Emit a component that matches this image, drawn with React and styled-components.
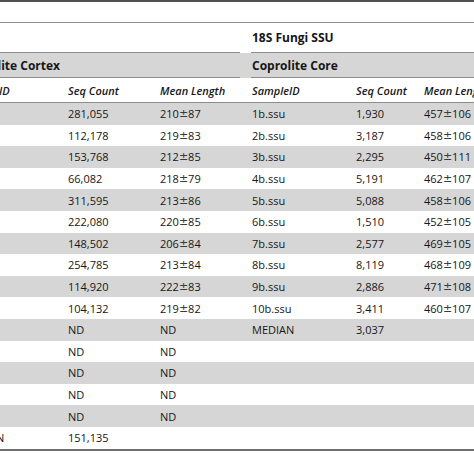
import styled, { createGlobalStyle } from 'styled-components';

const Global = createGlobalStyle`
  html, body {
    margin: 0;
    padding: 0;
    background: #ffffff;
  }
  body {
    font-family: "Open Sans", "Noto Sans", sans-serif;
    color: #161616;
  }
`;

const COLS = '106px 92px 80px 11px 105px 68px 96px';
const BAND = '#d6d6d6';
const LINE = '#8c8c8c';

const Viewport = styled.div`
  width: 474px;
  height: 474px;
  overflow: hidden;
`;

// the table is wider than the window: its left edge is cut off
const Sheet = styled.div`
  margin-left: -38px;
  width: 558px;
  border-top: 2px solid #505050;
  border-bottom: 2px solid #6e6e6e;
`;

const Row = styled.div`
  display: grid;
  grid-template-columns: ${COLS};
  height: ${(p) => p.$h}px;
  background: ${(p) => (p.$shade ? BAND : '#ffffff')};
  border-bottom: ${(p) => (p.$line ? `1px solid ${LINE}` : 'none')};
  box-sizing: border-box;
`;

const Group = styled.div`
  grid-column: ${(p) => p.$col} / span 3;
  display: flex;
  align-items: center;
  padding-left: ${(p) => p.$pad || 0}px;
  border-bottom: 1px solid ${LINE};
  font-size: 12px;
  font-weight: 700;
  white-space: nowrap;
`;

const Head = styled.div`
  display: flex;
  align-items: center;
  padding-left: ${(p) => p.$pad || 0}px;
  font-size: 11px;
  font-style: italic;
  font-weight: 600;
  white-space: nowrap;
`;

const Cell = styled.div`
  display: flex;
  align-items: center;
  padding-left: ${(p) => p.$pad || 0}px;
  font-size: 11px;
  white-space: nowrap;
`;

const PlusMinus = styled.span`
  font-family: "DejaVu Sans", sans-serif;
  font-size: 11px;
  color: #3a3a3a;
`;

const Spacer = styled.div``;

const left = [
  ['1a.ssu', '281,055', '210±87'],
  ['2a.ssu', '112,178', '219±83'],
  ['3a.ssu', '153,768', '212±85'],
  ['4a.ssu', '66,082', '218±79'],
  ['5a.ssu', '311,595', '213±86'],
  ['6a.ssu', '222,080', '220±85'],
  ['7a.ssu', '148,502', '206±84'],
  ['8a.ssu', '254,785', '213±84'],
  ['9a.ssu', '114,920', '222±83'],
  ['10a', '104,132', '219±82'],
  ['11a', 'ND', 'ND'],
  ['12a', 'ND', 'ND'],
  ['13a', 'ND', 'ND'],
  ['14a', 'ND', 'ND'],
  ['15a', 'ND', 'ND'],
  ['MEDIAN', '151,135', ''],
];

const right = [
  ['1b.ssu', '1,930', '457±106'],
  ['2b.ssu', '3,187', '458±106'],
  ['3b.ssu', '2,295', '450±111'],
  ['4b.ssu', '5,191', '462±107'],
  ['5b.ssu', '5,088', '458±106'],
  ['6b.ssu', '1,510', '452±105'],
  ['7b.ssu', '2,577', '469±105'],
  ['8b.ssu', '8,119', '468±109'],
  ['9b.ssu', '2,886', '471±108'],
  ['10b.ssu', '3,411', '460±107'],
  ['MEDIAN', '3,037', ''],
];

function Mean({ value }) {
  const parts = value.split('±');
  if (parts.length < 2) return <>{value}</>;
  return (
    <>
      {parts[0]}
      <PlusMinus>±</PlusMinus>
      {parts[1]}
    </>
  );
}

export default function App() {
  return (
    <>
      <Global />
      <Viewport>
        <Sheet>
          <Row $h={21} $line />
          <Row $h={30}>
            <Group $col={1} />
            <Group $col={5} $pad={1}>18S Fungi SSU</Group>
          </Row>
          <Row $h={25} $shade>
            <Group $col={1}>Coprolite Cortex</Group>
            <Group $col={5} $pad={1}>Coprolite Core</Group>
          </Row>
          <Row $h={25} $line>
            <Head>SampleID</Head>
            <Head>Seq Count</Head>
            <Head>Mean Length</Head>
            <Spacer />
            <Head $pad={1}>SampleID</Head>
            <Head>Seq Count</Head>
            <Head>Mean Length</Head>
          </Row>
          {left.map((l, i) => {
            const r = right[i] || ['', '', ''];
            return (
              <Row key={i} $h={21.6} $shade={i % 2 === 0}>
                <Cell>{l[0]}</Cell>
                <Cell>{l[1]}</Cell>
                <Cell><Mean value={l[2]} /></Cell>
                <Spacer />
                <Cell $pad={1}>{r[0]}</Cell>
                <Cell>{r[1]}</Cell>
                <Cell><Mean value={r[2]} /></Cell>
              </Row>
            );
          })}
        </Sheet>
      </Viewport>
    </>
  );
}
